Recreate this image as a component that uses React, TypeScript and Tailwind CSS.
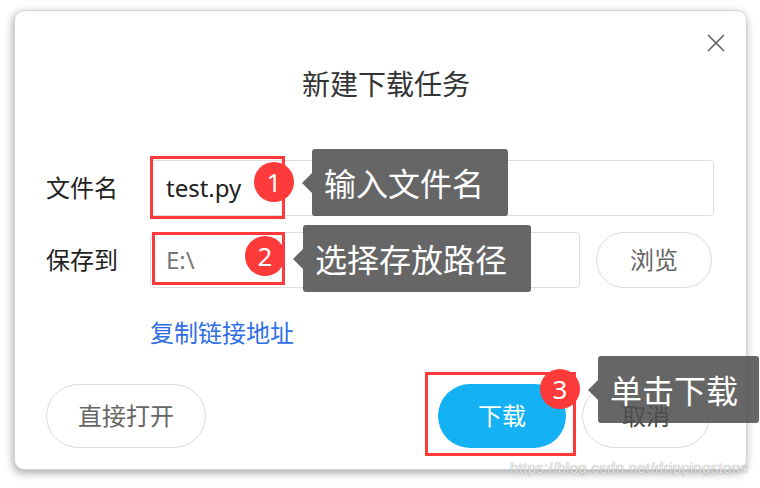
import { X } from "lucide-react";

const font = "font-['Noto_Sans','Noto_Sans_CJK_SC',sans-serif]";

// numbered red dot of the annotation layer
function Badge({ n, className }: { n: string; className: string }) {
  return (
    <div
      className={`absolute flex size-10 items-center justify-center rounded-full bg-[#ff3a3a] text-[26px] leading-none text-white ${className}`}
    >
      {n}
    </div>
  );
}

// dark callout with a small arrow on its left side
function Callout({ text, className }: { text: string; className: string }) {
  return (
    <div
      className={`absolute flex h-[67px] items-center rounded-[3px] bg-[#4f4f4f]/[0.87] px-3 pt-[2px] text-[32px] leading-none whitespace-nowrap text-white ${className}`}
    >
      <span className="absolute top-[24px] -left-[10px] size-0 border-y-[10px] border-r-[10px] border-y-transparent border-r-[#4f4f4f]/[0.87]" />
      {text}
    </div>
  );
}

function PillButton({ text, className }: { text: string; className: string }) {
  return (
    <button
      type="button"
      className={`flex items-center justify-center text-2xl ${className}`}
    >
      {text}
    </button>
  );
}

export default function App() {
  return (
    <div className={`relative h-[488px] w-[760px] overflow-hidden bg-white pt-[10px] pl-[14px] ${font}`}>
      {/* Dialog */}
      <div className="relative h-[460px] w-[733px] rounded-[10px] border border-[#d4d4d4] bg-white pt-[52px] pr-[32px] pl-[31px] shadow-[-1px_3px_8px_rgba(0,0,0,0.35)]">
        <button type="button" className="absolute top-[17px] right-[15px] text-[#666]">
          <X className="size-[30px]" strokeWidth={1.4} />
        </button>

        <h1 className="pl-[12px] text-center text-[28px] leading-[42px] font-normal text-[#333]">
          新建下载任务
        </h1>

        <div className="mt-[55px] flex flex-col gap-4">
          <div className="flex items-center">
            <label className="w-[104px] text-2xl text-[#222]">文件名</label>
            <div className="flex h-14 flex-1 items-center rounded-[4px] border border-[#dcdcdf] pl-[15px] text-2xl text-[#222]">
              test.py
            </div>
          </div>
          <div className="flex items-center">
            <label className="w-[104px] text-2xl text-[#222]">保存到</label>
            <div className="flex h-14 w-[430px] items-center rounded-[4px] border border-[#dcdcdf] pl-[15px] text-2xl text-[#777]">
              E:\
            </div>
            <PillButton
              text="浏览"
              className="ml-4 h-14 w-[116px] rounded-[28px] border border-[#dcdcdc] text-[#666]"
            />
          </div>
        </div>

        <div className="mt-[31px] pl-[104px] text-2xl leading-[28px] text-[#2f6fe6]">复制链接地址</div>

        <div className="mt-[37px] flex items-center">
          <PillButton text="直接打开" className="h-16 w-40 rounded-[32px] border border-[#dcdcdc] text-[#666]" />
          <PillButton text="下载" className="ml-[232px] h-16 w-32 rounded-[32px] bg-[#14b2f4] text-white" />
          <PillButton text="取消" className="ml-4 h-16 w-32 rounded-[32px] border border-[#dcdcdc] text-[#444]" />
        </div>
      </div>

      {/* Annotation layer */}
      <div className="absolute top-[156px] left-[150px] h-[63px] w-[135px] border-[3px] border-[#ff3a3a]" />
      <div className="absolute top-[232px] left-[152px] h-[53px] w-[133px] border-[3px] border-[#ff3a3a]" />
      <div className="absolute top-[372px] left-[425px] h-[84px] w-[151px] border-[3px] border-[#ff3a3a]" />
      <Badge n="1" className="top-[162px] left-[254px]" />
      <Badge n="2" className="top-[236px] left-[245px]" />
      <Badge n="3" className="top-[369px] left-[540px]" />
      <Callout text="输入文件名" className="top-[149px] left-[312px] w-[196px]" />
      <Callout text="选择存放路径" className="top-[225px] left-[303px] w-[228px]" />
      <Callout text="单击下载" className="top-[356px] left-[598px] w-[161px]" />

      {/* Watermark */}
      <div className="absolute top-[458px] left-[510px] font-['Liberation_Sans',sans-serif] text-[15px] leading-5 tracking-[0.3px] whitespace-nowrap text-white/80 [text-shadow:0_0_1px_rgba(0,0,0,0.5)]">
        https://blog.csdn.net/drippingstone
      </div>
    </div>
  );
}
